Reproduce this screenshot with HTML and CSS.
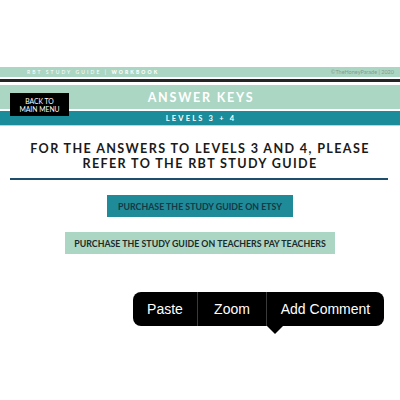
FILE: index.html
```html
<!DOCTYPE html>
<html>
<head>
<meta charset="utf-8">
<link rel="stylesheet" href="styles.css">
</head>
<body>
<div class="page">
  <div class="topbar">
    <span class="crumb">RBT STUDY GUIDE | <b>WORKBOOK</b></span>
    <span class="copy">©TheHoneyParade | 2020</span>
  </div>
  <div class="darkbar"></div>
  <div class="band"><span class="title">ANSWER KEYS</span></div>
  <div class="teal"><span class="sub">LEVELS 3 + 4</span></div>
  <div class="cyanline"></div>
  <div class="backbtn">BACK TO<br>MAIN MENU</div>

  <div class="message">
    <div class="line">FOR THE ANSWERS TO LEVELS 3 AND 4, PLEASE</div>
    <div class="line">REFER TO THE RBT STUDY GUIDE</div>
  </div>
  <div class="rule"></div>

  <div class="buttons">
    <div class="btn etsy">PURCHASE THE STUDY GUIDE ON ETSY</div>
    <div class="btn tpt">PURCHASE THE STUDY GUIDE ON TEACHERS PAY TEACHERS</div>
  </div>

  <div class="popup">
    <div class="item paste">Paste</div>
    <div class="item zoom">Zoom</div>
    <div class="item comment">Add Comment</div>
    <div class="arrow"></div>
  </div>
</div>
</body>
</html>
```
FILE: styles.css
```css
html, body {
  margin: 0;
  padding: 0;
  background: #ffffff;
}
.page {
  position: relative;
  width: 400px;
  height: 400px;
  overflow: hidden;
  padding-top: 67px;
  box-sizing: border-box;
  font-family: "Lato", "DejaVu Sans", sans-serif;
}
.topbar {
  height: 10px;
  background: #acd6c4;
  display: flex;
  justify-content: space-between;
  align-items: center;
  padding: 0 6px 0 27px;
  font-size: 5px;
  color: #ffffff;
}
.crumb {
  letter-spacing: 2.1px;
}
.crumb b {
  font-weight: 900;
}
.copy {
  color: #7f9c92;
  font-size: 5.5px;
}
.darkbar {
  margin-top: 2px;
  height: 3px;
  background: #242424;
}
.band {
  margin-top: 3px;
  height: 24px;
  background: #acd6c4;
  display: flex;
  justify-content: center;
  align-items: center;
}
.title {
  color: #ffffff;
  font-size: 12.5px;
  font-weight: 700;
  letter-spacing: 1.8px;
  margin-left: 2px;
}
.teal {
  margin-top: 2px;
  height: 14px;
  background: #1b8c9a;
  display: flex;
  justify-content: center;
  align-items: center;
}
.sub {
  color: #ffffff;
  font-size: 7.5px;
  font-weight: 700;
  letter-spacing: 2.2px;
  margin-left: 2px;
}
.cyanline {
  height: 1px;
  background: #a6dde3;
}
.backbtn {
  position: absolute;
  left: 10px;
  top: 93px;
  width: 59px;
  height: 23px;
  background: #000000;
  color: #ffffff;
  font-size: 6.8px;
  line-height: 8px;
  text-align: center;
  display: flex;
  align-items: center;
  justify-content: center;
}
.message {
  margin-top: 15px;
  display: flex;
  flex-direction: column;
  align-items: center;
  white-space: nowrap;
  font-size: 12.6px;
  line-height: 15px;
  font-weight: 700;
  letter-spacing: 1.35px;
  color: #1a1a1a;
}
.rule {
  margin: 7px 12px 0 10px;
  height: 2px;
  background: #1f4e6c;
}
.buttons {
  margin-top: 15px;
  display: flex;
  flex-direction: column;
  align-items: center;
  gap: 15px;
}
.btn {
  height: 22px;
  display: flex;
  align-items: center;
  justify-content: center;
  font-size: 8.8px;
  font-weight: 700;
  color: #163744;
  white-space: nowrap;
  box-sizing: border-box;
}
.etsy {
  width: 186px;
  background: #1f8b99;
}
.tpt {
  width: 270px;
  background: #acd6c4;
  color: #1c2a2a;
}
.popup {
  position: absolute;
  left: 133px;
  top: 292px;
  width: 251px;
  height: 34px;
  background: #000000;
  border-radius: 8px;
  display: flex;
  font-family: "Liberation Sans", Arial, sans-serif;
  font-size: 14px;
  color: #ffffff;
}
.item {
  display: flex;
  align-items: center;
  justify-content: center;
  height: 100%;
}
.paste {
  width: 64px;
  border-right: 1px solid #3a3a3a;
}
.zoom {
  width: 68px;
  border-right: 1px solid #3a3a3a;
}
.comment {
  flex: 1;
}
.arrow {
  position: absolute;
  left: 134px;
  top: 34px;
  width: 0;
  height: 0;
  border-left: 8px solid transparent;
  border-right: 8px solid transparent;
  border-top: 8px solid #000000;
}
```
